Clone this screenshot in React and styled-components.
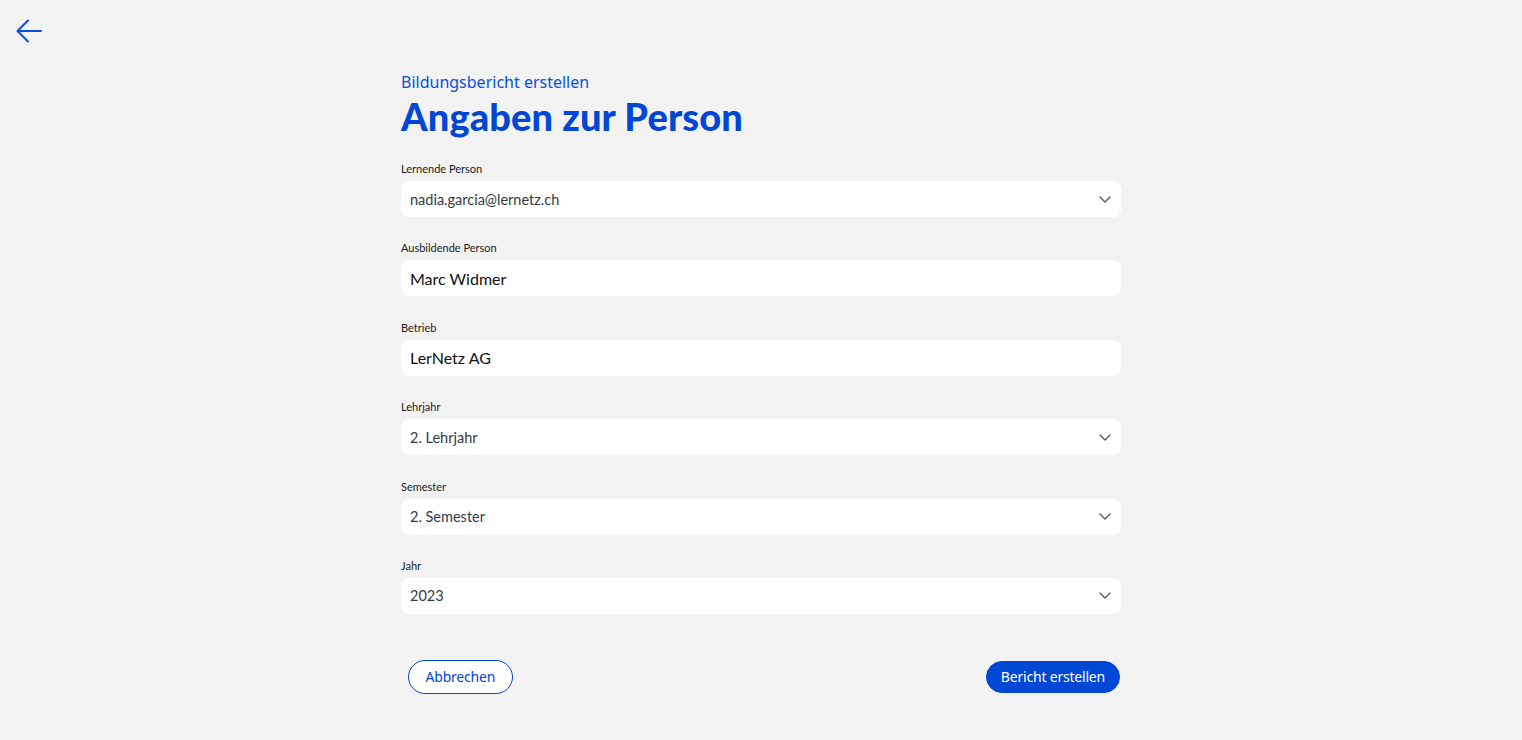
import React from 'react';
import styled, { createGlobalStyle } from 'styled-components';

const GlobalStyle = createGlobalStyle`
    body {
        margin: 0;
        background: #f2f2f2;
        font-family: Lato, "Noto Sans", sans-serif;
        color: #1f1f1f;
    }
`;

const fields = [
    { label: 'Lernende Person', value: 'nadia.garcia@lernetz.ch', select: true },
    { label: 'Ausbildende Person', value: 'Marc Widmer' },
    { label: 'Betrieb', value: 'LerNetz AG' },
    { label: 'Lehrjahr', value: '2. Lehrjahr', select: true },
    { label: 'Semester', value: '2. Semester', select: true },
    { label: 'Jahr', value: '2023', select: true },
];

const Chevron = () => (
    <svg width="12" height="7" viewBox="0 0 12 7" fill="none">
        <path d="M1 1l5 5 5-5" stroke="#4a5563" strokeWidth="1.3" strokeLinecap="round" strokeLinejoin="round" />
    </svg>
);

const App = () => {
    return (
        <Page>
            <GlobalStyle />
            <TopBar>
                <BackButton aria-label="Zurück">
                    <svg width="26" height="24" viewBox="0 0 26 24" fill="none">
                        <path d="M25 12H2M12 1.5L1.5 12 12 22.5" stroke="#0a4fe0" strokeWidth="2" strokeLinecap="round" strokeLinejoin="round" />
                    </svg>
                </BackButton>
            </TopBar>

            <Form>
                <Kicker>Bildungsbericht erstellen</Kicker>
                <Title>Angaben zur Person</Title>

                <Fields>
                    {fields.map((f) => (
                        <Field key={f.label}>
                            <Label>{f.label}</Label>
                            <Input $select={f.select}>
                                <span>{f.value}</span>
                                {f.select && <Chevron />}
                            </Input>
                        </Field>
                    ))}
                </Fields>

                <Actions>
                    <Button $outline>Abbrechen</Button>
                    <Button>Bericht erstellen</Button>
                </Actions>
            </Form>
        </Page>
    );
};

const Page = styled.div`
    min-height: 740px;
`;

const TopBar = styled.div`
    padding: 19px 0 0 16px;
    height: 43px;
    box-sizing: border-box;
`;

const BackButton = styled.button`
    border: none;
    background: none;
    padding: 0;
    width: 26px;
    height: 24px;
    display: flex;
    cursor: pointer;
`;

const Form = styled.main`
    width: 720px;
    margin: 0 auto;
    padding-top: 29px;
`;

const Kicker = styled.div`
    font-family: "Noto Sans", sans-serif;
    font-size: 16px;
    line-height: 20px;
    color: #0a4fe0;
`;

const Title = styled.h1`
    margin: 2px 0 24px;
    font-size: 38px;
    line-height: 44px;
    font-weight: 900;
    color: #0047d6;
    letter-spacing: 0.1px;
`;

const Fields = styled.div`
    display: flex;
    flex-direction: column;
    gap: 24.4px;
`;

const Field = styled.div`
    display: flex;
    flex-direction: column;
    gap: 5px;
`;

const Label = styled.label`
    font-size: 11px;
    line-height: 14px;
    color: #1a1a1a;
`;

const Input = styled.div`
    height: 36px;
    background: #fff;
    border-radius: 8px;
    display: flex;
    align-items: center;
    justify-content: space-between;
    padding: 0 10px 0 9px;
    box-sizing: border-box;
    font-size: ${(p) => (p.$select ? '14.5px' : '16px')};
    color: ${(p) => (p.$select ? '#333a44' : '#111')};
`;

const Actions = styled.div`
    display: flex;
    justify-content: space-between;
    align-items: center;
    margin-top: 46px;
    padding: 0 1px 0 7px;
`;

const Button = styled.button`
    font-family: "Noto Sans", sans-serif;
    font-size: 14px;
    height: ${(p) => (p.$outline ? '34px' : '32px')};
    padding: 0 ${(p) => (p.$outline ? '16.5px' : '14px')};
    border-radius: 17px;
    border: 1px solid #0047d6;
    background: ${(p) => (p.$outline ? '#fff' : '#0047d6')};
    color: ${(p) => (p.$outline ? '#0047d6' : '#fff')};
    cursor: pointer;
    letter-spacing: -0.2px;
`;

export default App;
